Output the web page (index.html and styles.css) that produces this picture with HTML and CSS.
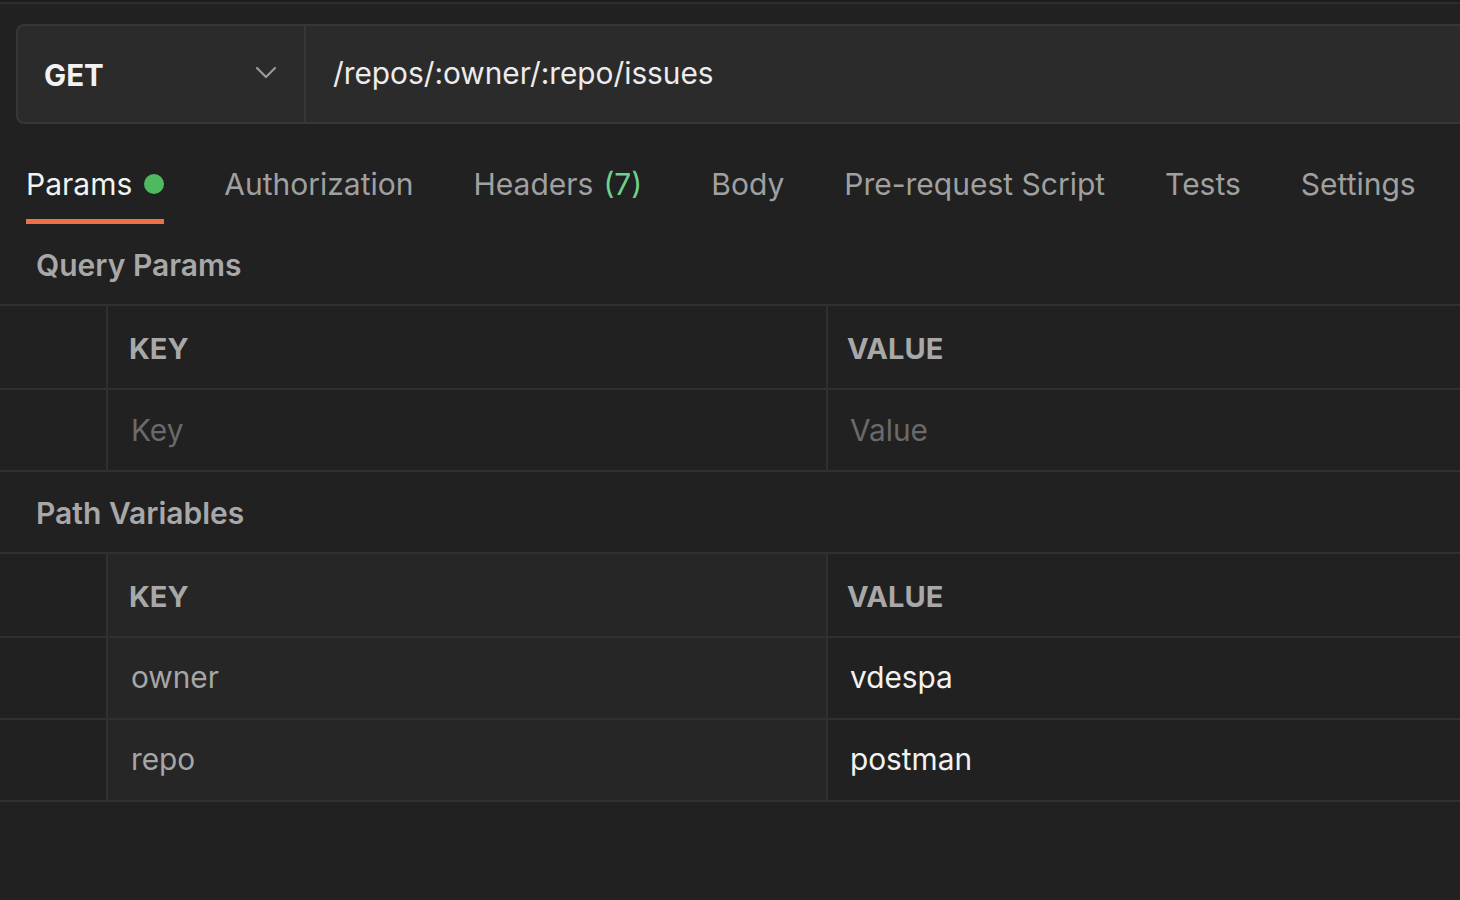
FILE: index.html
```html
<!DOCTYPE html>
<html lang="en">
<head>
<meta charset="utf-8">
<title>Request</title>
<link rel="stylesheet" href="styles.css">
</head>
<body>
<div class="topstrip"></div>
<div class="urlbar">
  <div class="method">
    <span class="method-name">GET</span>
    <svg class="chevron" width="22" height="14" viewBox="0 0 22 14"><path d="M2 2 L11 11 L20 2" fill="none" stroke="#9a9a9a" stroke-width="2.2" stroke-linecap="round" stroke-linejoin="round"/></svg>
  </div>
  <div class="url">/repos/:owner/:repo/issues</div>
</div>
<nav class="tabs">
  <div class="tab active">Params <span class="dot"></span></div>
  <div class="tab">Authorization</div>
  <div class="tab headers">Headers <span class="count">(7)</span></div>
  <div class="tab">Body</div>
  <div class="tab">Pre-request Script</div>
  <div class="tab">Tests</div>
  <div class="tab">Settings</div>
</nav>
<h2 class="section">Query Params</h2>
<div class="table">
  <div class="row head">
    <div class="gutter"></div>
    <div class="cell key">KEY</div>
    <div class="cell value">VALUE</div>
  </div>
  <div class="row">
    <div class="gutter"></div>
    <div class="cell key placeholder">Key</div>
    <div class="cell value placeholder">Value</div>
  </div>
</div>
<h2 class="section">Path Variables</h2>
<div class="table">
  <div class="row head">
    <div class="gutter"></div>
    <div class="cell key readonly">KEY</div>
    <div class="cell value">VALUE</div>
  </div>
  <div class="row">
    <div class="gutter"></div>
    <div class="cell key readonly muted">owner</div>
    <div class="cell value filled">vdespa</div>
  </div>
  <div class="row">
    <div class="gutter"></div>
    <div class="cell key readonly muted">repo</div>
    <div class="cell value filled">postman</div>
  </div>
</div>
</body>
</html>
```

FILE: styles.css
```css
* { box-sizing: border-box; }
html, body { margin: 0; padding: 0; }
body {
  background: #212121;
  font-family: Inter, "Noto Sans", "Liberation Sans", sans-serif;
  color: #a6a6a6;
  width: 1460px;
  height: 900px;
  overflow: hidden;
}
.topstrip {
  height: 2px;
  background: #1d1d1d;
  border-bottom: 2px solid #2d2d2d;
  box-sizing: content-box;
}
.urlbar {
  margin: 20px 0 0 16px;
  width: 1500px;
  height: 100px;
  display: flex;
  background: #2b2b2b;
  border: 2px solid #373737;
  border-radius: 8px;
}
.method {
  width: 288px;
  flex: none;
  display: flex;
  align-items: center;
  justify-content: space-between;
  padding: 0 27px 0 26px;
  border-right: 2px solid #373737;
}
.method-name {
  font-size: 29.5px;
  font-weight: 700;
  color: #f2f2f2;
  padding-top: 2px;
}
.chevron { display: block; margin-top: -2px; }
.url {
  display: flex;
  align-items: center;
  padding-left: 27px;
  padding-bottom: 2px;
  font-size: 29.8px;
  color: #ececec;
}
.tabs {
  display: flex;
  height: 100px;
  padding-left: 26px;
  gap: 60px;
}
.tab {
  display: flex;
  align-items: center;
  padding-top: 25px;
  font-size: 30px;
  color: #a0a0a0;
  border-bottom: 5px solid transparent;
  white-space: nowrap;
}
.tab.active {
  color: #f2f2f2;
  border-bottom-color: #ee7048;
}
.dot {
  display: inline-block;
  width: 20px;
  height: 20px;
  border-radius: 50%;
  background: #4fb95f;
  margin-left: 12px;
}
.tab.headers { margin-right: 9px; }
.count { color: #6ed28f; margin-left: 10px; }
.section {
  margin: 0;
  height: 80px;
  display: flex;
  align-items: center;
  padding: 2px 0 0 36px;
  font-size: 30px;
  font-weight: 600;
  color: #a8a8a8;
}
.table {
  border-top: 2px solid #303030;
}
.row {
  display: flex;
  height: 82px;
  border-bottom: 2px solid #303030;
}
.row.head { height: 84px; }
.gutter { width: 106px; flex: none; }
.cell {
  display: flex;
  align-items: center;
  border-left: 2px solid #303030;
  padding-left: 21px;
  font-size: 29.8px;
}
.cell.key { width: 720px; flex: none; }
.cell.value { flex: 1; }
.head .cell {
  font-weight: 700;
  font-size: 29px;
  color: #a8a8a8;
  padding-top: 2px;
}
.head .cell.value { padding-left: 19px; }
.readonly { background: #262626; }
.placeholder { color: #6a6a6a; padding-left: 23px; padding-top: 0; }
.placeholder.value { padding-left: 22px; }
.muted { color: #a6a6a6; padding-left: 23px; padding-bottom: 2px; }
.filled { color: #f2f2f2; padding-left: 22px; padding-bottom: 2px; }
```
